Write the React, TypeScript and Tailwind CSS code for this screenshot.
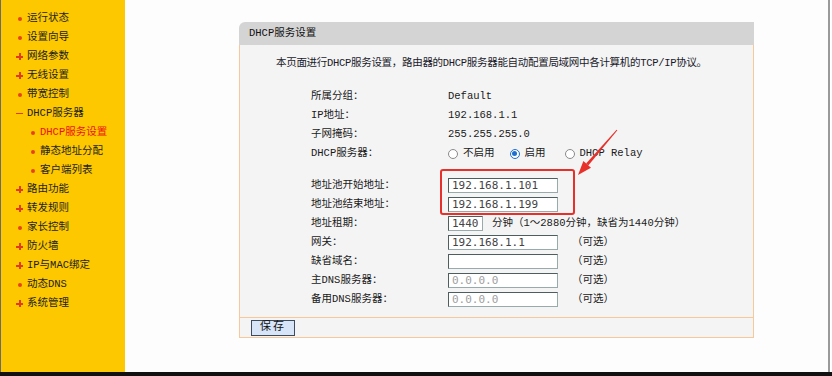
import React from 'react';

const FONT = "font-['Liberation_Mono','Noto_Sans_CJK_SC',monospace]";

type NavItem = { label: string; mark: 'plus' | 'dot' | 'minus' | 'sub'; active?: boolean };

const nav: NavItem[] = [
  { label: '运行状态', mark: 'dot' },
  { label: '设置向导', mark: 'dot' },
  { label: '网络参数', mark: 'plus' },
  { label: '无线设置', mark: 'plus' },
  { label: '带宽控制', mark: 'dot' },
  { label: 'DHCP服务器', mark: 'minus' },
  { label: 'DHCP服务设置', mark: 'sub', active: true },
  { label: '静态地址分配', mark: 'sub' },
  { label: '客户端列表', mark: 'sub' },
  { label: '路由功能', mark: 'plus' },
  { label: '转发规则', mark: 'plus' },
  { label: '家长控制', mark: 'dot' },
  { label: '防火墙', mark: 'plus' },
  { label: 'IP与MAC绑定', mark: 'plus' },
  { label: '动态DNS', mark: 'dot' },
  { label: '系统管理', mark: 'plus' },
];

function Mark({ kind }: { kind: NavItem['mark'] }) {
  if (kind === 'plus')
    return (
      <span className="relative block w-[7px] h-[7px]">
        <span className="absolute left-0 top-[3px] w-[7px] h-[1.5px] bg-[#e43a1c]" />
        <span className="absolute top-0 left-[3px] h-[7px] w-[1.5px] bg-[#e43a1c]" />
      </span>
    );
  if (kind === 'minus') return <span className="block w-[7px] h-[1.5px] bg-[#e43a1c]" />;
  return <span className="block w-[4px] h-[4px] rounded-full bg-[#e8401c] mx-[1.5px]" />;
}

function Sidebar() {
  return (
    <div className="w-[125px] shrink-0 bg-[#fdc800] border-l border-[#6b6b6b] pt-[9px]">
      {nav.map((n) => (
        <div
          key={n.label}
          className={`flex items-center h-[19px] ${n.mark === 'sub' ? 'pl-[28px]' : 'pl-[15px]'}`}
        >
          <span className="w-[11px] flex items-center">
            <Mark kind={n.mark} />
          </span>
          <span className={`text-[10.5px] leading-none ${n.active ? 'text-[#f01010]' : 'text-[#1e1e1e]'}`}>
            {n.label}
          </span>
        </div>
      ))}
    </div>
  );
}

function Row({ label, children }: { label: string; children: React.ReactNode }) {
  return (
    <div className="flex items-center h-[19px] pl-[71px]">
      <span className="w-[137px] shrink-0 text-[10.5px] leading-none text-[#1a1a1a]">{label}</span>
      <div className="flex items-center text-[10.5px] leading-none text-[#1a1a1a]">{children}</div>
    </div>
  );
}

function Input({ value, w = 'w-[110px]', muted }: { value: string; w?: string; muted?: boolean }) {
  return (
    <div
      className={`${w} h-[15px] bg-white border border-[#4e5e5e] border-b-[#9aa] border-r-[#9aa] flex items-center pl-[3px] font-['DejaVu_Sans_Mono',monospace] text-[11px] ${
        muted ? 'text-[#a0a0a0]' : 'text-[#444]'
      }`}
    >
      {value}
    </div>
  );
}

function Radio({ on }: { on?: boolean }) {
  return (
    <span
      className={`w-[10px] h-[10px] rounded-full border flex items-center justify-center bg-white ${
        on ? 'border-[#1f6fd0]' : 'border-[#8a8a8a]'
      }`}
    >
      {on && <span className="w-[5px] h-[5px] rounded-full bg-[#1f6fd0]" />}
    </span>
  );
}

function Optional() {
  return <span className="ml-[14px]">（可选）</span>;
}

export default function App() {
  return (
    <div className={`w-[832px] h-[376px] bg-[#111] flex flex-col ${FONT}`}>
      <div className="flex h-[372px]">
        <Sidebar />
        <div className="flex-1 bg-[#fefdfe] pl-[114px] pt-[22px] border-r-2 border-[#9a9a9a]">
          <div className="relative w-[515px]">
            {/* 标题栏 */}
            <div className="h-[23px] bg-[#d4d4d4] rounded-tl-[6px] flex items-center pl-[10px] text-[10.5px] text-[#111]">
              DHCP服务设置
            </div>

            {/* 内容区 */}
            <div className="bg-[#f4f4f4] border-x border-b border-[#f7c99a]">
              <div className="pl-[36px] pt-[11px] h-[42px] text-[10.5px] leading-[14px] tracking-[-0.3px] text-[#1a1a2a]">
                本页面进行DHCP服务设置，路由器的DHCP服务器能自动配置局域网中各计算机的TCP/IP协议。
              </div>
              <Row label="所属分组：">Default</Row>
              <Row label="IP地址：">192.168.1.1</Row>
              <Row label="子网掩码：">255.255.255.0</Row>
              <Row label="DHCP服务器：">
                <span className="flex items-center gap-[5px]">
                  <Radio />
                  <span>不启用</span>
                </span>
                <span className="ml-[15px] flex items-center gap-[5px]">
                  <Radio on />
                  <span>启用</span>
                </span>
                <span className="ml-[19px] flex items-center gap-[5px]">
                  <Radio />
                  <span>DHCP Relay</span>
                </span>
              </Row>
              <div className="h-[13px]" />
              <Row label="地址池开始地址：">
                <Input value="192.168.1.101" />
              </Row>
              <Row label="地址池结束地址：">
                <Input value="192.168.1.199" />
              </Row>
              <Row label="地址租期：">
                <Input value="1440" w="w-[35px]" />
                <span className="ml-[9px]">分钟（1～2880分钟，缺省为1440分钟）</span>
              </Row>
              <Row label="网关：">
                <Input value="192.168.1.1" />
                <Optional />
              </Row>
              <Row label="缺省域名：">
                <Input value="" />
                <Optional />
              </Row>
              <Row label="主DNS服务器：">
                <Input value="0.0.0.0" muted />
                <Optional />
              </Row>
              <Row label="备用DNS服务器：">
                <Input value="0.0.0.0" muted />
                <Optional />
              </Row>
              <div className="h-[8px]" />

              {/* 底部按钮 */}
              <div className="border-t border-[#f7c99a] h-[20px] flex items-center pl-[11px]">
                <button className="w-[44px] h-[16px] bg-[#d8e5f8] border border-[#3d4c5c] text-[11px] leading-none tracking-[2px] text-[#111] flex items-center justify-center">
                  保存
                </button>
              </div>
            </div>

            {/* 标注 */}
            <div className="absolute left-[201px] top-[147px] w-[135px] h-[46px] border-2 border-[#e8302a] rounded-[3px]" />
            <svg className="absolute left-[331px] top-[103px]" width="55" height="55" viewBox="0 0 55 55">
              <polygon points="47.4,5.3 46.6,4.7 16.1,38.4 18.3,40.4" fill="#e8302a" />
              <polygon points="8,50 21,42.7 13.4,36.1" fill="#e8302a" />
            </svg>
          </div>
        </div>
        <div className="w-[2px] bg-white" />
      </div>
    </div>
  );
}
